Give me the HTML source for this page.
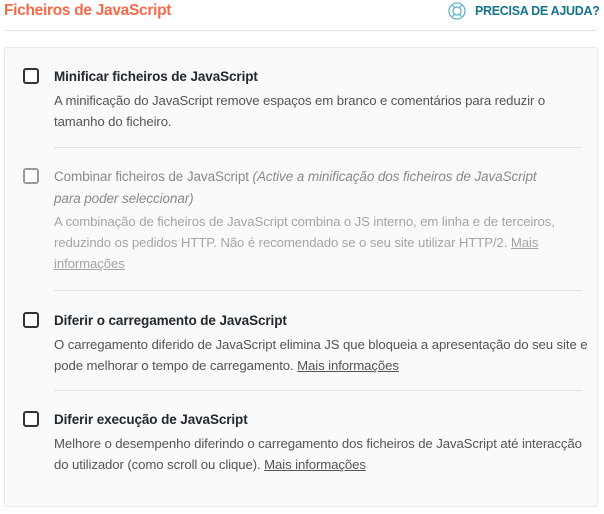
<!DOCTYPE html>
<html><head><meta charset="utf-8"><style>
*{margin:0;padding:0;box-sizing:border-box}
body{width:604px;height:514px;background:#fff;font-family:"Liberation Sans",sans-serif;position:relative;overflow:hidden}
.t{position:absolute;left:4px;top:2px;font-size:15.5px;font-weight:bold;color:#f56a48;letter-spacing:-0.3px}
.help{position:absolute;left:448px;top:2px;font-size:12.5px;font-weight:bold;color:#17748c;letter-spacing:-0.3px;display:flex;align-items:center;white-space:nowrap}
.help svg{margin-right:9px}
.hr{position:absolute;left:4px;top:30px;width:593px;height:1px;background:#e2e4e8}
.box{position:absolute;left:4px;top:47px;width:594px;height:460px;background:#f9fafb;border:1px solid #e8eaed;border-radius:2px}
.row{position:absolute;left:49px;width:540px;white-space:nowrap}
.cb{position:absolute;left:-31px;top:2px;width:16px;height:16px;border:2px solid #333;border-radius:3px;background:#fff}
.h{font-size:13.5px;color:#23282d;line-height:22px;letter-spacing:-0.1px}
.b{font-weight:bold}
.d{font-size:13.2px;color:#555;line-height:21px;letter-spacing:-0.1px;margin-top:2px}
.dis .h{color:#8a8a8a}.dis .d{color:#a5a5a5}.dis .cb{border-color:#999}
a{color:inherit;text-decoration:underline}
.sep{position:absolute;left:49px;width:528px;height:1px;background:#e2e4e8}
</style></head><body>
<div class="t">Ficheiros de JavaScript</div>
<div class="help"><svg width="18" height="18" viewBox="0 0 18 18" fill="none" stroke="#5fb3c8" stroke-width="1.3"><circle cx="9" cy="9" r="8"/><circle cx="9" cy="9" r="4"/><path d="M4.5 3.5l2 2M13.5 3.5l-2 2M4.5 14.5l2-2M13.5 14.5l-2-2"/></svg>PRECISA DE AJUDA?</div>
<div class="hr"></div>
<div class="box">
<div class="row" style="top:18px"><div class="cb"></div><div class="h b">Minificar ficheiros de JavaScript</div><div class="d">A minificação do JavaScript remove espaços em branco e comentários para reduzir o<br>tamanho do ficheiro.</div></div>
<div class="sep" style="top:99px"></div>
<div class="row dis" style="top:118px"><div class="cb"></div><div class="h">Combinar ficheiros de JavaScript <i>(Active a minificação dos ficheiros de JavaScript<br>para poder seleccionar)</i></div><div class="d" style="margin-top:1px">A combinação de ficheiros de JavaScript combina o JS interno, em linha e de terceiros,<br>reduzindo os pedidos HTTP. Não é recomendado se o seu site utilizar HTTP/2. <a>Mais</a><br><a>informações</a></div></div>
<div class="sep" style="top:242px"></div>
<div class="row" style="top:262px"><div class="cb"></div><div class="h b">Diferir o carregamento de JavaScript</div><div class="d">O carregamento diferido de JavaScript elimina JS que bloqueia a apresentação do seu site e<br>pode melhorar o tempo de carregamento. <a>Mais informações</a></div></div>
<div class="sep" style="top:342px"></div>
<div class="row" style="top:361px"><div class="cb"></div><div class="h b">Diferir execução de JavaScript</div><div class="d">Melhore o desempenho diferindo o carregamento dos ficheiros de JavaScript até interacção<br>do utilizador (como scroll ou clique). <a>Mais informações</a></div></div>
</div>
</body></html>
